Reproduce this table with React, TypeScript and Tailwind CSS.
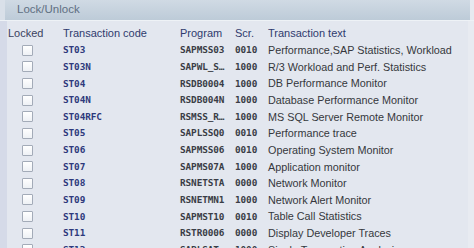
import React from 'react';

type Row = {
  code: string;
  program: string;
  scr: string;
  text: string;
};

const rows: Row[] = [
  { code: 'ST03', program: 'SAPMSS03', scr: '0010', text: 'Performance,SAP Statistics, Workload' },
  { code: 'ST03N', program: 'SAPWL_S…', scr: '1000', text: 'R/3 Workload and Perf. Statistics' },
  { code: 'ST04', program: 'RSDB0004', scr: '1000', text: 'DB Performance Monitor' },
  { code: 'ST04N', program: 'RSDB004N', scr: '1000', text: 'Database Performance Monitor' },
  { code: 'ST04RFC', program: 'RSMSS_R…', scr: '1000', text: 'MS SQL Server Remote Monitor' },
  { code: 'ST05', program: 'SAPLSSQ0', scr: '0010', text: 'Performance trace' },
  { code: 'ST06', program: 'SAPMSS06', scr: '0010', text: 'Operating System Monitor' },
  { code: 'ST07', program: 'SAPMS07A', scr: '1000', text: 'Application monitor' },
  { code: 'ST08', program: 'RSNETSTA', scr: '0000', text: 'Network Monitor' },
  { code: 'ST09', program: 'RSNETMN1', scr: '1000', text: 'Network Alert Monitor' },
  { code: 'ST10', program: 'SAPMST10', scr: '0010', text: 'Table Call Statistics' },
  { code: 'ST11', program: 'RSTR0006', scr: '0000', text: 'Display Developer Traces' },
  { code: 'ST12', program: 'SAPLSAT', scr: '1000', text: 'Single Transaction Analysis' },
];

const grid = 'grid grid-cols-[55px_117px_55px_33px_1fr] items-center';
const mono = "font-['DejaVu_Sans_Mono',monospace] text-[9.4px] font-bold tracking-[-0.1px]";

function Checkbox() {
  return (
    <span className="ml-[14px] block h-[11px] w-[11px] rounded-[1px] border border-[#a3abb8] bg-gradient-to-b from-[#ffffff] to-[#eef1f5]" />
  );
}

export default function App() {
  return (
    <div className="flex h-[248px] w-[474px] flex-col overflow-hidden bg-[#e3e7ef] font-['Liberation_Sans',Arial,sans-serif] text-[10.8px]">
      {/* Title bar */}
      <div className="flex h-[21px] shrink-0 border-b border-[#eef2f6]">
        <div className="w-[5px] bg-[#d9e0e9]" />
        <div className="flex flex-1 items-center bg-gradient-to-b from-[#d0dae4] to-[#bdcbd8] pl-[12px] text-[11.5px] text-[#5f6f82]">
          Lock/Unlock
        </div>
        <div className="w-[4px] bg-[#e6eaf0]" />
      </div>

      <div className="flex flex-1">
        <div className="w-[7px] shrink-0 bg-[#d5dae8]" />
        <div className="flex-1 pl-[1px] pt-[4px]">
          <div className={`${grid} h-[17px] text-[11px] text-[#2f3b6e]`}>
            <span className="text-[#3a4260]">Locked</span>
            <span>Transaction code</span>
            <span>Program</span>
            <span>Scr.</span>
            <span>Transaction text</span>
          </div>
          {rows.map((r) => (
            <div key={r.code} className={`${grid} h-[16.64px]`}>
              <Checkbox />
              <span className={`${mono} text-[#2e3a7c]`}>{r.code}</span>
              <span className={`${mono} text-[#3a3d46]`}>{r.program}</span>
              <span className={`${mono} text-[#3a3d46]`}>{r.scr}</span>
              <span className="whitespace-nowrap text-[#35373c]">{r.text}</span>
            </div>
          ))}
        </div>
        <div className="w-[6px] shrink-0 bg-[#e8ebf1]" />
      </div>
    </div>
  );
}
